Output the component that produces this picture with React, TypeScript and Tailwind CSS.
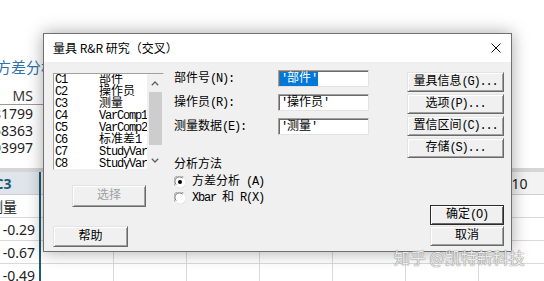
import React from 'react';

const dlgFont = "font-['Liberation_Mono','Noto_Sans_CJK_SC',monospace]";

// SimSun-style half-width latin: squeeze the mono font to 6px per char
const Mixed = ({ text }: { text: string }) => (
  <>
    {text
      .split(/([\x20-\x7e]+)/)
      .filter(Boolean)
      .map((part, i) =>
        /^[\x20-\x7e]+$/.test(part) ? (
          <span key={i} className="tracking-[-1.2px]">{part}</span>
        ) : (
          <span key={i}>{part}</span>
        )
      )}
  </>
);

const Btn = ({
  label,
  className = '',
  disabled = false,
  isDefault = false,
}: {
  label: string;
  className?: string;
  disabled?: boolean;
  isDefault?: boolean;
}) => (
  <div
    className={`flex items-center justify-center bg-[#f0f0f0] border text-[12px] leading-[14px] ${
      isDefault
        ? 'border-[#2b2b2b] shadow-[inset_1px_1px_0_#fff,inset_-1px_-1px_0_#696969]'
        : 'border-t-[#e3e3e3] border-l-[#e3e3e3] border-r-[#696969] border-b-[#696969] shadow-[inset_1px_1px_0_#fff,inset_-1px_-1px_0_#a0a0a0]'
    } ${disabled ? 'text-[#a0a0a0]' : 'text-black'} ${className}`}
  >
    <Mixed text={label} />
  </div>
);

const Field = ({ value, selected = false }: { value: string; selected?: boolean }) => (
  <div className="h-[17px] w-[91px] bg-white border border-t-[#a0a0a0] border-l-[#a0a0a0] border-r-[#e3e3e3] border-b-[#e3e3e3] shadow-[inset_1px_1px_0_#696969] pl-[1px] pt-[1px] flex">
    <span
      className={`h-[14px] leading-[14px] text-[12px] px-[1px] ${
        selected ? 'bg-[#0078d7] text-white' : 'text-black'
      }`}
    >
      <Mixed text={value} />
    </span>
  </div>
);

const Radio = ({ on }: { on: boolean }) => (
  <svg width="12" height="12" viewBox="0 0 12 12">
    <circle cx="6" cy="6" r="5.5" fill="#fff" />
    <path d="M1.2 9.5 A5.5 5.5 0 0 1 9.5 1.2" fill="none" stroke="#a0a0a0" strokeWidth="1" />
    <path d="M2.2 8.6 A4.5 4.5 0 0 1 8.6 2.2" fill="none" stroke="#696969" strokeWidth="1" />
    <path d="M10.6 2.8 A5.5 5.5 0 0 1 2.8 10.6" fill="none" stroke="#e3e3e3" strokeWidth="1" />
    {on && <circle cx="6" cy="6" r="2" fill="#000" />}
  </svg>
);

const Chevron = ({ up }: { up: boolean }) => (
  <svg width="8" height="5" viewBox="0 0 8 5">
    <path
      d={up ? 'M0.8 4.2 L4 1 L7.2 4.2' : 'M0.8 0.8 L4 4 L7.2 0.8'}
      fill="none"
      stroke="#606060"
      strokeWidth="1.3"
    />
  </svg>
);

const listItems = [
  ['C1', '部件'],
  ['C2', '操作员'],
  ['C3', '测量'],
  ['C4', 'VarComp1'],
  ['C5', 'VarComp2'],
  ['C6', '标准差1'],
  ['C7', 'StudyVar'],
  ['C8', 'StudyVar'],
];

const fields = [
  { label: '部件号(N):', value: "'部件'", selected: true },
  { label: '操作员(R):', value: "'操作员'" },
  { label: '测量数据(E):', value: "'测量'" },
];

const sheetCols = ['C4', 'C5', 'C6', 'C7', 'C8', 'C9', 'C10'];

export default function App() {
  return (
    <div className="relative w-[544px] h-[281px] overflow-hidden bg-white font-['Noto_Sans','Noto_Sans_CJK_SC',sans-serif]">
      {/* session window */}
      <div className="h-[168px] overflow-hidden">
        <div className="pt-[57px] -ml-[4px] text-[15px] leading-[20px] text-[#2f72ad] whitespace-nowrap">
          方差分析表
        </div>
        <div className="mt-[11px] w-[200px] h-[17px] border-b border-[#9a9a9a] text-[14px] leading-[16px] text-[#333]">
          <div className="-ml-[47px] w-[80px] text-right">MS</div>
        </div>
        {['81799', '58363', '03997'].map((v) => (
          <div key={v} className="h-[17px] text-[14px] leading-[17px] text-[#222]">
            <div className="-ml-[47px] w-[80px] text-right">{v}</div>
          </div>
        ))}
      </div>
      <div className="h-[4px] bg-[#d6d6d6]" />

      {/* worksheet */}
      <div className="flex -ml-[33px] text-[14px] text-[#222]">
        <div className="w-[74px] shrink-0 border-r-2 border-[#1f5a74]">
          <div className="h-[23px] bg-[#dfe5ea] border-b border-[#cfcfcf] flex items-center justify-center font-bold text-[#1f5a74]">
            C3
          </div>
          <div className="h-[23px] border-b border-[#d9d9d9] flex items-center justify-center">测量</div>
          {['-0.29', '-0.67', '-0.49'].map((v) => (
            <div key={v} className="h-[23px] border-b border-[#d9d9d9] flex items-center justify-end pr-[4px]">
              {v}
            </div>
          ))}
        </div>
        {sheetCols.map((c) => (
          <div key={c} className="w-[73px] shrink-0 border-r border-[#d9d9d9]">
            <div className="h-[23px] bg-[#f3f3f3] border-b border-[#cfcfcf] flex items-center justify-center">
              {c}
            </div>
            <div className="h-[23px] border-b border-[#d9d9d9]" />
            <div className="h-[23px] border-b border-[#d9d9d9]" />
            <div className="h-[23px] border-b border-[#d9d9d9]" />
            <div className="h-[23px] border-b border-[#d9d9d9]" />
          </div>
        ))}
      </div>

      {/* dialog */}
      <div className={`absolute left-[43px] top-[33px] w-[469px] h-[219px] border border-[#707070] shadow-[0_0_16px_rgba(0,0,0,0.35)] flex flex-col ${dlgFont}`}>
        <div className="h-[28px] bg-white flex items-center justify-between pl-[9px] pr-[10px]">
          <span className="font-['Noto_Sans_CJK_SC',sans-serif] text-[12px] text-black">量具 R&amp;R 研究（交叉）</span>
          <svg width="10" height="10" viewBox="0 0 10 10">
            <path d="M0.5 0.5 L9.5 9.5 M9.5 0.5 L0.5 9.5" stroke="#111" strokeWidth="1" />
          </svg>
        </div>

        <div className="flex-1 bg-[#f0f0f0] flex pl-[9px] pr-[7px] text-black">
          {/* variable list */}
          <div className="w-[111px] flex flex-col pt-[11px]">
            <div className="h-[97px] flex bg-white border border-t-[#a0a0a0] border-l-[#a0a0a0] border-r-[#f0f0f0] border-b-[#f0f0f0] overflow-hidden">
              <div className="flex-1 text-[12px] leading-[12px]">
                {listItems.map(([c, n]) => (
                  <div key={c} className="h-[12px] flex whitespace-nowrap">
                    <span className="w-[45px] pl-[1px]">
                      <Mixed text={c} />
                    </span>
                    <span>
                      <Mixed text={n} />
                    </span>
                  </div>
                ))}
              </div>
              <div className="w-[17px] bg-[#f0f0f0] flex flex-col items-center">
                <div className="h-[18px] flex items-center justify-center">
                  <Chevron up />
                </div>
                <div className="w-[13px] h-[53px] bg-[#cdcdcd]" />
                <div className="flex-1 flex items-end justify-center pb-[6px]">
                  <Chevron up={false} />
                </div>
              </div>
            </div>
            <Btn label="选择" disabled className="mt-[15px] ml-[19px] w-[74px] h-[22px]" />
            <Btn label="帮助" className="mt-[19px] w-[75px] h-[21px]" />
          </div>

          {/* fields */}
          <div className="ml-[10px] w-[195px] pt-[8px]">
            <div className="grid grid-cols-[104px_91px] gap-y-[7px] items-center">
              {fields.map((f) => (
                <React.Fragment key={f.label}>
                  <div className="text-[12px] leading-[14px] whitespace-nowrap">
                    <Mixed text={f.label} />
                  </div>
                  <Field value={f.value} selected={f.selected} />
                </React.Fragment>
              ))}
            </div>
            <div className="mt-[23px] text-[12px] leading-[14px]">分析方法</div>
            <div className="mt-[2px] h-[16px] flex items-center gap-[6px] text-[12px]">
              <Radio on />
              <Mixed text="方差分析(A)" />
            </div>
            <div className="h-[16px] flex items-center gap-[6px] text-[12px]">
              <Radio on={false} />
              <Mixed text="Xbar 和 R(X)" />
            </div>
          </div>

          {/* buttons */}
          <div className="ml-[38px] w-[97px] flex flex-col justify-between pt-[10px] pb-[5px]">
            <div className="flex flex-col gap-[2px]">
              <Btn label="量具信息(G)..." className="h-[20px]" />
              <Btn label="选项(P)..." className="h-[20px]" />
              <Btn label="置信区间(C)..." className="h-[20px]" />
              <Btn label="存储(S)..." className="h-[20px]" />
            </div>
            <div className="flex flex-col items-end gap-[1px]">
              <Btn label="确定(O)" isDefault className="w-[74px] h-[20px]" />
              <Btn label="取消" className="w-[74px] h-[20px]" />
            </div>
          </div>
        </div>
      </div>

      {/* watermark */}
      <div className="absolute left-[394px] top-[249px] text-[16px] leading-[17px] text-white/85 [text-shadow:0_0_1px_#777,0_0_1px_#777] whitespace-nowrap font-['Noto_Sans_CJK_SC',sans-serif]">
        知乎 @凯特新科技
      </div>
    </div>
  );
}
